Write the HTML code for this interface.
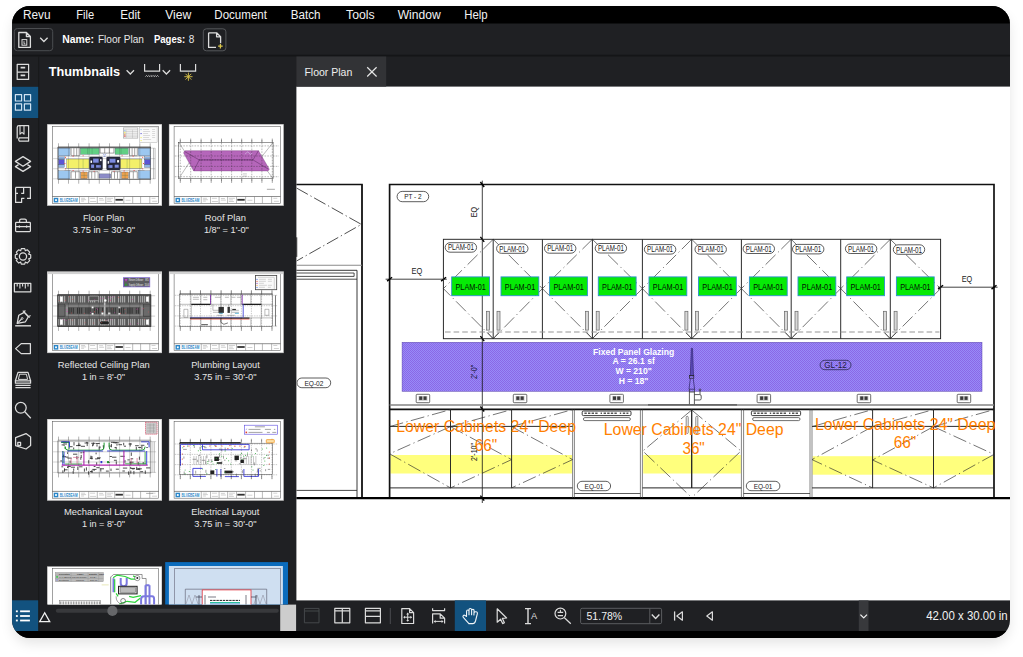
<!DOCTYPE html>
<html lang="en">
<head>
<meta charset="utf-8">
<title>Revu - Floor Plan</title>
<style>
html,body{margin:0;padding:0;background:#fff;}
body{width:1023px;height:657px;overflow:hidden;position:relative;font-family:"Liberation Sans", sans-serif;}
.shadow{position:absolute;left:13px;top:7px;width:996px;height:630px;border-radius:18px;background:#000;
 box-shadow:0 6px 13px rgba(0,0,0,.115),0 1px 3px rgba(0,0,0,.04);}
svg.app{position:absolute;left:0;top:0;width:1023px;height:657px;display:block;font-family:"Liberation Sans", sans-serif;}
svg text{white-space:pre;}
</style>
</head>
<body>
<div class="shadow"></div>
<svg class="app" width="1023" height="657" viewBox="0 0 1023 657">
<defs>
<clipPath id="winclip"><rect x="12" y="6" width="998" height="632" rx="18" ry="18"/></clipPath>
<pattern id="glz" width="2" height="2" patternUnits="userSpaceOnUse">
<rect width="2" height="2" fill="#978cf8"/><rect width="1" height="1" fill="#8b68e6"/><rect x="1" y="1" width="1" height="1" fill="#8b68e6"/>
</pattern>
</defs>
<g clip-path="url(#winclip)">
<rect x="0" y="0" width="1023" height="657" fill="#1f2023"/>
<rect x="0" y="0" width="1023" height="23.5" fill="#000"/>
<rect x="0" y="54.7" width="1023" height="1.8" fill="#141517"/>
<rect x="296.4" y="86.6" width="730" height="513.8" fill="#fff"/>
<rect x="296.4" y="56.5" width="89.8" height="30.1" fill="#323336"/>
<rect x="0" y="631" width="1023" height="30" fill="#000"/>
<rect x="38.2" y="56.5" width="1" height="574.5" fill="#17181a"/>
<g id="menubar">
<text x="22.9" y="18.8" font-size="12" fill="#f2f2f2" textLength="27.6" lengthAdjust="spacingAndGlyphs">Revu</text>
<text x="76.3" y="18.8" font-size="12" fill="#f2f2f2" textLength="17.9" lengthAdjust="spacingAndGlyphs">File</text>
<text x="120.2" y="18.8" font-size="12" fill="#f2f2f2" textLength="20.2" lengthAdjust="spacingAndGlyphs">Edit</text>
<text x="165.2" y="18.8" font-size="12" fill="#f2f2f2" textLength="26.1" lengthAdjust="spacingAndGlyphs">View</text>
<text x="214.3" y="18.8" font-size="12" fill="#f2f2f2" textLength="52.7" lengthAdjust="spacingAndGlyphs">Document</text>
<text x="290.7" y="18.8" font-size="12" fill="#f2f2f2" textLength="29.8" lengthAdjust="spacingAndGlyphs">Batch</text>
<text x="346.1" y="18.8" font-size="12" fill="#f2f2f2" textLength="28.6" lengthAdjust="spacingAndGlyphs">Tools</text>
<text x="397.7" y="18.8" font-size="12" fill="#f2f2f2" textLength="43.0" lengthAdjust="spacingAndGlyphs">Window</text>
<text x="464.3" y="18.8" font-size="12" fill="#f2f2f2" textLength="23.4" lengthAdjust="spacingAndGlyphs">Help</text>
</g>
<g id="toolbar">
<rect x="14.3" y="28.5" width="38.4" height="22.2" rx="3" fill="none" stroke="#4b4d50" stroke-width="1"/>
<path d="M18.8 32.5h7.6l4 4v10.8h-11.6z M26.4 32.5v4h4" fill="none" stroke="#dcdcdc" stroke-width="1.3" stroke-linejoin="round"/>
<rect x="22" y="39.6" width="4.8" height="5.6" fill="none" stroke="#dcdcdc" stroke-width="1"/>
<path d="M24 41.2v2.6h1.3" fill="none" stroke="#dcdcdc" stroke-width="0.9"/>
<path d="M40.2 37.8l3.7 3.7l3.7-3.7" fill="none" stroke="#dcdcdc" stroke-width="1.3"/>
<text x="62.3" y="43.2" font-size="10" fill="#fff" font-weight="bold" textLength="31.7" lengthAdjust="spacingAndGlyphs">Name:</text>
<text x="97.9" y="43.2" font-size="10" fill="#e8e8e8" textLength="46" lengthAdjust="spacingAndGlyphs">Floor Plan</text>
<text x="153.9" y="43.2" font-size="10" fill="#fff" font-weight="bold" textLength="31.3" lengthAdjust="spacingAndGlyphs">Pages:</text>
<text x="188.8" y="43.2" font-size="10" fill="#e8e8e8">8</text>
<rect x="203.3" y="28.8" width="22.6" height="22" rx="3" fill="none" stroke="#55575a" stroke-width="1"/>
<path d="M208.6 32.8h8l4 4v6.4 M216.6 32.8v4h4 M208.6 32.8v14.6h7.4" fill="none" stroke="#dcdcdc" stroke-width="1.3" stroke-linejoin="round"/>
<path d="M220.4 43.9v4.6M218.1 46.2h4.6" stroke="#d9c64a" stroke-width="1.3" fill="none"/>
</g>
<text x="304.4" y="75.8" font-size="10.6" fill="#efefef" textLength="47.9" lengthAdjust="spacingAndGlyphs">Floor Plan</text>
<path d="M367.2 67.3l9.4 9.2M376.6 67.3l-9.4 9.2" stroke="#e4e4e4" stroke-width="1.2" fill="none"/>
<g id="sidebar" fill="none" stroke="#dcdcdc" stroke-width="1.25" stroke-linejoin="round">
<rect x="12" y="86.8" width="26.2" height="31.2" fill="#12527f" stroke="none"/>
<rect x="17.2" y="64.4" width="11.4" height="15"/><path d="M17.2 72h11.4"/>
<path d="M20.6 67.6h4.6M20.6 75.4h4.6" stroke-width="1.6"/>
<g stroke="#cfe2f2" stroke-width="1.2"><rect x="15.4" y="94.6" width="6.2" height="6.4"/><rect x="24.4" y="94.6" width="6.2" height="6.4"/><rect x="15.4" y="103.8" width="6.2" height="6.4"/><rect x="24.4" y="103.8" width="6.2" height="6.4"/></g>
<path d="M17.2 138.6V127.4a1.8 1.8 0 0 1 1.8-1.8h9.6v12.2H19.4a2.2 2.2 0 0 0 0 3.2h9.2v-3.2"/>
<path d="M20 125.6v8.6l2-1.9l2 1.9v-8.6" stroke-width="1.1"/>
<path d="M23 156.6l7.6 4.8l-7.6 4.8l-7.6-4.8z"/><path d="M18.6 164.6l-3.2 2l7.6 4.8l7.6-4.8l-3.2-2"/>
<path d="M15.6 187.4h14.8v11h-3.4M24.4 198.4h-2.8v4h-6v-15"/><path d="M23.6 187.4v6h-2.4M15.6 193.4h2.4"/>
<rect x="15.6" y="222.4" width="14.8" height="9.2" rx="0.8"/><path d="M19.6 222.4v-1.6a1.6 1.6 0 0 1 1.6-1.6h3.6a1.6 1.6 0 0 1 1.6 1.6v1.6M15.6 226.6h14.8M19.4 225.6v2.2M26.6 225.6v2.2"/>
<path d="M21.28 248.69L24.72 248.69L25.32 250.76L25.35 250.77L27.23 249.73L29.67 252.17L28.63 254.05L28.64 254.08L30.71 254.68L30.71 258.12L28.64 258.72L28.63 258.75L29.67 260.63L27.23 263.07L25.35 262.03L25.32 262.04L24.72 264.11L21.28 264.11L20.68 262.04L20.65 262.03L18.77 263.07L16.33 260.63L17.37 258.75L17.36 258.72L15.29 258.12L15.29 254.68L17.36 254.08L17.37 254.05L16.33 252.17L18.77 249.73L20.65 250.77L20.68 250.76z" stroke-width="1.15"/>
<circle cx="23" cy="256.4" r="3.6"/>
<rect x="14.4" y="283.4" width="16.4" height="8.4"/><path d="M17.2 283.4v3M19.9 283.4v5M22.6 283.4v3M25.3 283.4v5M28 283.4v3" stroke-width="1.1"/>
<path d="M15.2 325.8h15.8" stroke-width="1.4"/><path d="M17.2 323.4l1.6-8.2l5.4-2.8l4.2 4.4l-3 5z"/><path d="M24.2 312.4l1-2.2M28.4 316.8l2.2-1.2M22.8 310.6l6.8 7M17.2 323.4l4.4-4.4" stroke-width="1.1"/><circle cx="22.2" cy="318.4" r="0.9" stroke-width="0.9"/>
<path d="M15.6 348.6l5.6-5h9.2v10h-9.2z"/>
<path d="M18 372.4h10l2.6 8.4h-15.2z"/><path d="M19.6 374.2h6.8l1.2 5.2h-9.2z" stroke-width="1"/><path d="M15.4 380.8v2.4h15.2v-2.4M15.4 385.4h15.2M15.4 387.6h15.2" stroke-width="1.2"/>
<circle cx="20.8" cy="407.8" r="5.4"/><path d="M24.8 411.8l6 6.4"/>
<path d="M15.6 437.6l10.4-4l4.6 3.4v8.6l-4.6 3.4l-10.4-3.4z"/><rect x="17.8" y="442.4" width="2.8" height="3"/>
</g>
<text x="48.8" y="76.2" font-size="12.6" fill="#fff" font-weight="bold" textLength="71.4" lengthAdjust="spacingAndGlyphs">Thumbnails</text>
<g fill="none" stroke="#dcdcdc" stroke-width="1.25">
<path d="M126.6 70.3l3.7 3.7l3.7-3.7"/>
<path d="M144.6 64v7.2h15V64" stroke-width="1.2"/>
<path d="M145.4 76.6l1.1-1.1l1.1 1.1l1.1-1.1l1.1 1.1l1.1-1.1l1.1 1.1l1.1-1.1l1.1 1.1l1.1-1.1l1.1 1.1l1.1-1.1l1.1 1.1" stroke-width="0.8"/>
<path d="M162.7 70.3l3.7 3.7l3.7-3.7"/>
<path d="M180.4 64v7.2h15.2V64" stroke-width="1.2"/>
<path d="M188.4 72.6v8.2M184.3 76.7h8.2M185.5 73.8l5.8 5.8M191.3 73.8l-5.8 5.8" stroke="#d8c24a" stroke-width="0.9"/>
</g>
<rect x="12" y="600.3" width="26.2" height="30.7" fill="#12527f"/>
<rect x="15.9" y="610.4" width="1.9" height="1.8" fill="#fff"/><rect x="20.1" y="610.4" width="9.8" height="1.8" fill="#fff"/>
<rect x="15.9" y="615.1" width="1.9" height="1.8" fill="#fff"/><rect x="20.1" y="615.1" width="9.8" height="1.8" fill="#fff"/>
<rect x="15.9" y="619.6" width="1.9" height="1.8" fill="#fff"/><rect x="20.1" y="619.6" width="9.8" height="1.8" fill="#fff"/>
<path d="M44.7 612.8l-5 8.8h10z" fill="none" stroke="#f0f0f0" stroke-width="1.3" stroke-linejoin="miter"/>
<rect x="55.8" y="608.8" width="223" height="4" rx="2" fill="#38393c"/>
<circle cx="112.4" cy="610.9" r="5.1" fill="#66676a"/>
<rect x="280.2" y="604.6" width="15.9" height="26.4" fill="#cdcdcd"/>
<g id="bottombar" fill="none" stroke="#dcdcdc" stroke-width="1.2" stroke-linejoin="round">
<rect x="454.8" y="600.4" width="31.2" height="30.6" fill="#12527f" stroke="none"/>
<g stroke="#45484b" stroke-width="1"><rect x="304.4" y="608.4" width="14.6" height="14.4"/><path d="M304.4 611h14.6"/></g>
<rect x="334.8" y="608.4" width="15" height="14.4"/><path d="M334.8 610.8h15M342.3 608.4v14.4"/>
<rect x="365.4" y="608.4" width="15" height="14.4"/><path d="M365.4 610.8h15M365.4 616.4h15"/>
<path d="M390.3 608v16" stroke="#4a4c4f" stroke-width="1"/>
<path d="M401.8 608.6h7.8l4 4v10.9h-11.8z M409.6 608.6v4h4"/>
<path d="M404.2 617.2h7M407.7 613.6v7.2" stroke-width="1"/><path d="M407.7 612.6l1.5 1.8h-3zM407.7 621.8l1.5-1.8h-3zM403.2 617.2l1.8-1.5v3zM412.2 617.2l-1.8-1.5v3z" fill="#dcdcdc" stroke="none"/>
<path d="M432.6 608.2v2.4h12v-2.4" stroke-width="1.2"/><path d="M432.6 623.6v-9.8h7.6l4.4 4.4v5.4M440.2 613.8v4.4h4.4"/>
<path d="M434.6 621.4h8" stroke-width="1"/><path d="M433.6 621.4l2-1.5v3zM443.6 621.4l-2-1.5v3z" fill="#dcdcdc" stroke="none"/>
<path d="M468.9 623.6L463.3 617.4C462.3 616.1 463.7 614.7 465 615.4L466.5 616.5L466.6 611.2C466.6 609.5 469 609.5 469 611.2L469 609.8C469 608 471.6 608 471.6 609.8L471.6 610.6C471.6 608.9 474.2 609 474.1 610.8L474.2 612.6C474.9 611.2 477.7 611.6 477.4 613.5L475.5 621C475 622.8 474.3 623.6 472.8 623.6ZM469 611.2V614.8M471.6 610.6V614.8M474.1 610.8L473.9 615" stroke="#f1f5f8" stroke-width="1.1" stroke-linejoin="round" stroke-linecap="round"/>
<path d="M497.2 608.8v13.4l3.4-3l2 4.4l1.8-0.8l-2-4.4l4.2-0.4z" stroke-width="1.2"/>
<path d="M525 608.6h6M525 623.6h6M528 608.6v15" stroke-width="1.4"/>
<text x="531" y="619.4" font-size="9.6" fill="#dcdcdc" textLength="6.2" lengthAdjust="spacingAndGlyphs" stroke="none">A</text>
<circle cx="560.4" cy="613.6" r="5.4"/><path d="M564.4 617.8l6.4 6"/><path d="M557.6 612.4h5.6M560.4 609.8v2.6M557.8 615.6h5.2" stroke-width="1.1"/>
<rect x="580.6" y="608.3" width="81" height="15.4" rx="1.5" stroke="#5a5c5f" stroke-width="1"/><path d="M649.8 608.3v15.4" stroke="#5a5c5f" stroke-width="1"/>
<path d="M651.8 614.6l3.8 3.8l3.8-3.8" stroke-width="1.4"/>
<text x="586.5" y="620" font-size="10.4" fill="#f0f0f0" textLength="35.7" lengthAdjust="spacingAndGlyphs" stroke="none">51.78%</text>
<path d="M674.6 611.4v9.2" stroke-width="1.3"/><path d="M682.4 611.8v8.4l-5.6-4.2z" stroke-width="1.2"/>
<path d="M712.4 611.8v8.4l-5.6-4.2z" stroke-width="1.2"/>
<rect x="858.8" y="600.4" width="9.7" height="30.6" fill="#38393c" stroke="none"/>
<path d="M860.4 614.6l3.3 3.3l3.3-3.3" stroke-width="1.3" stroke="#f0f0f0"/>
<text x="926.2" y="620.2" font-size="12" fill="#f2f2f2" textLength="81.5" lengthAdjust="spacingAndGlyphs" stroke="none">42.00 x 30.00 in</text>
</g>
<g id="thumb1" transform="translate(47.1 124.1)">
<rect x="0" y="0" width="114.9" height="81.8" fill="#c4c4c4"/><rect x="0.7" y="0.7" width="113.5" height="80.2" fill="#fff"/>
<rect x="5.2" y="2.4" width="106.4" height="76.8" fill="none" stroke="#555" stroke-width="0.55"/>
<rect x="10.8" y="23.2" width="92.8" height="32" fill="#fff" stroke="#333" stroke-width="0.6"/>
<rect x="10.8" y="22.4" width="92.8" height="1.5" fill="#6a6a6a"/>
<g stroke="#4a5a70" stroke-width="0.35">
<rect x="11.1" y="24" width="11.8" height="7.7" fill="#9cc7f0"/>
<rect x="11.1" y="46.7" width="11.8" height="8" fill="#9cc7f0"/>
<rect x="91.2" y="24" width="11.8" height="7.7" fill="#9cc7f0"/>
<rect x="91.2" y="46.7" width="11.8" height="8" fill="#9cc7f0"/>
<rect x="11.4" y="32.7" width="5.8" height="3" fill="#8fb4e6"/>
<rect x="11.4" y="35.7" width="5.8" height="5" fill="#5b55d6"/>
<rect x="11.4" y="40.7" width="5.8" height="2.6" fill="#8fb4e6"/>
<rect x="97.4" y="32.7" width="5.8" height="3" fill="#8fb4e6"/>
<rect x="97.4" y="35.7" width="5.8" height="5" fill="#5b55d6"/>
<rect x="97.4" y="40.7" width="5.8" height="2.6" fill="#8fb4e6"/>
<rect x="33.4" y="24" width="18.6" height="6.2" fill="#62cf84"/>
<rect x="67.9" y="24" width="13.2" height="6.2" fill="#62cf84"/>
<rect x="19.6" y="34.9" width="22.4" height="9.4" fill="#f3f069"/>
<rect x="73" y="34.9" width="21.8" height="9.4" fill="#f3f069"/>
<rect x="33.7" y="47.9" width="6.7" height="6.8" fill="#eea04e"/>
<rect x="74.6" y="47.9" width="6.7" height="6.8" fill="#eea04e"/>
<rect x="52" y="49.8" width="11.6" height="4.2" fill="#8d8cc8"/>
</g>
<path d="M40.4 24v6.2M45 24v6.2M74 24v6.2M36 34.9v9.4M80 34.9v9.4M37 47.9v6.8M34 51.3h6.4M78 47.9v6.8M74.6 51.3h6.7" stroke="#3a6a48" stroke-width="0.35" opacity=".7"/>
<rect x="42.2" y="32.6" width="13.4" height="13.4" rx="1.4" fill="#23253a"/><rect x="59.3" y="32.6" width="14" height="13.4" rx="1.4" fill="#23253a"/>
<g fill="#7d8be0"><rect x="46" y="34.4" width="5.6" height="4.2"/><rect x="44" y="40.4" width="3" height="3.4"/><rect x="49" y="41" width="4.6" height="2.6"/><rect x="62.4" y="34.6" width="6" height="4"/><rect x="61.4" y="41" width="4" height="2.8"/><rect x="67.6" y="40.6" width="4" height="3"/></g>
<g fill="#fff"><rect x="43.4" y="36.4" width="1.6" height="2.4"/><rect x="53" y="35" width="1.4" height="2"/><rect x="60.6" y="37" width="1.2" height="2.6"/><rect x="70" y="36" width="2" height="2.4"/></g>
<path d="M24 24v7.6h8.6V24M26.8 24v7.6M29.6 24v7.6M53 24v5h13.8V24M57.6 24v5M62.2 24v5M82.4 24v7.6h7.8V24M85 24v7.6M87.6 24v7.6M24 47.6v7M24 47.6h8.8v7M28.4 47.6v7M41.4 47.6v7M41.4 47.6h9.6v7M44.6 47.6v7M47.8 47.6v7M64.4 47.6h9.2v7M64.4 47.6v7M67.4 47.6v7M70.4 47.6v7M82.4 47.6h7.8v7M82.4 47.6v7M86.2 47.6v7" stroke="#333" stroke-width="0.45" fill="none"/>
<path d="M17.4 32.2h80M17.4 46.4h80" stroke="#777" stroke-width="0.35"/>
<g fill="#e33"><circle cx="18.4" cy="33.2" r="0.55"/><circle cx="26" cy="32" r="0.55"/><circle cx="36" cy="31.6" r="0.55"/><circle cx="75" cy="31.6" r="0.55"/><circle cx="86" cy="32" r="0.55"/><circle cx="95.6" cy="33.2" r="0.55"/><circle cx="18.4" cy="44.6" r="0.55"/><circle cx="26" cy="46.4" r="0.55"/><circle cx="36" cy="47" r="0.55"/><circle cx="47" cy="47.2" r="0.55"/><circle cx="67" cy="47.2" r="0.55"/><circle cx="77" cy="46.8" r="0.55"/><circle cx="87" cy="46.4" r="0.55"/><circle cx="95.6" cy="44.6" r="0.55"/><circle cx="17.8" cy="39.4" r="0.55"/><circle cx="96.4" cy="39.4" r="0.55"/></g>
<path d="M55.8 29.6l1.6 1.6l1.6-1.6M56.2 31.6l1.2 1.2l1.2-1.2" stroke="#3a5ad0" stroke-width="0.45" fill="none"/>
<path d="M11.4 23.2v32M21.4 23.2v32M31.6 23.2v32M42 23.2v32M52.2 23.2v32M62.4 23.2v32M72.5 23.2v32M82.5 23.2v32M92.7 23.2v32M103.1 23.2v32M6 24.1h102M6 34.5h102M6 44.6h102M6 54.7h102" stroke="#444" stroke-width="0.3" opacity=".75"/>
<path d="M11.4 19.2v3.8M11.4 55.4v4.2M21.4 19.2v3.8M21.4 55.4v4.2M31.6 19.2v3.8M31.6 55.4v4.2M42 19.2v3.8M42 55.4v4.2M52.2 19.2v3.8M52.2 55.4v4.2M62.4 19.2v3.8M62.4 55.4v4.2M72.5 19.2v3.8M72.5 55.4v4.2M82.5 19.2v3.8M82.5 55.4v4.2M92.7 19.2v3.8M92.7 55.4v4.2M103.1 19.2v3.8M103.1 55.4v4.2" stroke="#444" stroke-width="0.5" opacity=".8"/>
<path d="M106.4 24v31M108 24v31" stroke="#666" stroke-width="0.4"/>
<rect x="76.4" y="3.8" width="14.4" height="10.2" fill="#f4f4f4" stroke="#777" stroke-width="0.4"/><path d="M76.4 5.6h14.4M76.4 7.4h14.4M76.4 9.2h14.4M76.4 11h14.4M76.4 12.6h14.4M79 5.6v8.4M85.4 5.6v8.4" stroke="#999" stroke-width="0.3"/>
<g><rect x="77" y="7.8" width="1.4" height="1.1" fill="#f3f069"/><rect x="77" y="9.6" width="1.4" height="1.1" fill="#eea04e"/><rect x="77" y="11.4" width="1.4" height="1.1" fill="#e44"/><rect x="77" y="6" width="1.4" height="1.1" fill="#9cc7f0"/></g>
<rect x="92.4" y="2.9" width="17.6" height="15.2" fill="#fafafa" stroke="#999" stroke-width="0.4"/><path d="M96 5.4h6M96 7.4h7M96 9.4h5M96 11.4h7M96 13.4h6M96 15.4h8M105 5.4h3M105 7.4h3M105 9.4h3M105 11.4h3M105 13.4h3" stroke="#aaa" stroke-width="0.4"/>
<g><rect x="93.4" y="5" width="1.2" height="1" fill="#9cc7f0"/><rect x="93.4" y="9" width="1.2" height="1" fill="#5b55d6"/><rect x="93.4" y="13" width="1.2" height="1" fill="#f3f069"/><rect x="93.4" y="16" width="1.2" height="1" fill="#f3f069"/></g>
<g id="tb">
<path d="M5.2 72.4h106.4" stroke="#444" stroke-width="0.6"/>
<path d="M32.4 72.4v6.8M41.6 72.4v6.8M50.2 72.4v6.8M58.7 72.4v6.8M67.6 72.4v6.8M76.7 72.4v6.8M85.6 72.4v6.8M93.5 72.4v6.8M102.7 72.4v6.8" stroke="#777" stroke-width="0.5"/>
<rect x="6.6" y="73.7" width="4.6" height="4.6" fill="#2a86c8"/><rect x="8" y="75.1" width="1.8" height="1.8" fill="#fff"/>
<text x="12.6" y="78" font-size="4.6" font-weight="bold" fill="#2a86c8" textLength="17.8" lengthAdjust="spacingAndGlyphs">BLUEBEAM</text>
<rect x="68.4" y="74.8" width="7.4" height="1.8" fill="#333"/>
<path d="M34 74.2h4M34 75.6h5M34 77h3M43 74.2h5M43 77.4h6M52 74.4h4M52 76h5M60 74.2h6M60 75.8h4M60 77.4h5M78.5 76.2h5M104.4 74.2h4M105 77.2h5" stroke="#999" stroke-width="0.45"/>
</g>
</g>
<text x="103.7" y="220.5" font-size="9.7" fill="#e6e6e6" text-anchor="middle" textLength="41.5" lengthAdjust="spacingAndGlyphs">Floor Plan</text>
<text x="103.9" y="232.5" font-size="9.7" fill="#e6e6e6" text-anchor="middle" textLength="62.3" lengthAdjust="spacingAndGlyphs">3.75 in = 30'-0&quot;</text>
<g id="thumb2" transform="translate(168.9 124.1)">
<rect x="0" y="0" width="114.9" height="81.8" fill="#c4c4c4"/><rect x="0.7" y="0.7" width="113.5" height="80.2" fill="#fff"/>
<rect x="5.2" y="2.4" width="106.4" height="76.8" fill="none" stroke="#555" stroke-width="0.55"/>
<rect x="9.8" y="18.3" width="94.4" height="36.2" fill="none" stroke="#444" stroke-width="0.55"/>
<path d="M9.8 18.3l12 18.1l-12 18.1M104.2 18.3l-14 17.6l14 18.6" stroke="#555" stroke-width="0.4" fill="none"/>
<path d="M16.3 26.6h73.3l10.4 17.8a1.6 1.6 0 0 1-1.4 2.4H24.8L15.3 30a2.2 2.2 0 0 1 1-3.4z" fill="#b566ba" stroke="#7a3d80" stroke-width="0.4"/>
<path d="M30.3 35.8h53.8M16 27.6l14.3 8.2l-5.4 11M89.6 26.6l-5.5 9.2l15 9" stroke="#5a2a60" stroke-width="0.5" fill="none"/>
<path d="M30.3 35.8h53.8" stroke="#402048" stroke-width="0.8" stroke-dasharray="0.8 0.8"/>
<path d="M11.4 16v41M21.8 16v41M32.2 16v41M42.3 16v41M52.6 16v41M62.7 16v41M72.8 16v41M82.9 16v41M93 16v41M103.4 16v41M6 21.8h104M6 31.9h104M6 42.3h104M6 52.6h104" stroke="#222" stroke-width="0.42" stroke-dasharray="1.6 1.2" opacity=".75"/>
<path d="M11.4 14.5v3.8M11.4 54.6v4.2M21.8 14.5v3.8M21.8 54.6v4.2M32.2 14.5v3.8M32.2 54.6v4.2M42.3 14.5v3.8M42.3 54.6v4.2M52.6 14.5v3.8M52.6 54.6v4.2M62.7 14.5v3.8M62.7 54.6v4.2M72.8 14.5v3.8M72.8 54.6v4.2M82.9 14.5v3.8M82.9 54.6v4.2M93 14.5v3.8M93 54.6v4.2M103.4 14.5v3.8M103.4 54.6v4.2" stroke="#222" stroke-width="0.5" opacity=".8"/>
<path d="M98 65.2h8" stroke="#555" stroke-width="0.5"/><path d="M74 49.6h4M74 51h4M74 52.4h4" stroke="#999" stroke-width="0.4"/>
<path d="M76 30l3-2.4l2.4 2.8l2-1.6" stroke="#d8d0f0" stroke-width="0.5" fill="none"/>
<g id="tb">
<path d="M5.2 72.4h106.4" stroke="#444" stroke-width="0.6"/>
<path d="M32.4 72.4v6.8M41.6 72.4v6.8M50.2 72.4v6.8M58.7 72.4v6.8M67.6 72.4v6.8M76.7 72.4v6.8M85.6 72.4v6.8M93.5 72.4v6.8M102.7 72.4v6.8" stroke="#777" stroke-width="0.5"/>
<rect x="6.6" y="73.7" width="4.6" height="4.6" fill="#2a86c8"/><rect x="8" y="75.1" width="1.8" height="1.8" fill="#fff"/>
<text x="12.6" y="78" font-size="4.6" font-weight="bold" fill="#2a86c8" textLength="17.8" lengthAdjust="spacingAndGlyphs">BLUEBEAM</text>
<rect x="68.4" y="74.8" width="7.4" height="1.8" fill="#333"/>
<path d="M34 74.2h4M34 75.6h5M34 77h3M43 74.2h5M43 77.4h6M52 74.4h4M52 76h5M60 74.2h6M60 75.8h4M60 77.4h5M78.5 76.2h5M104.4 74.2h4M105 77.2h5" stroke="#999" stroke-width="0.45"/>
</g>
</g>
<text x="225.3" y="220.5" font-size="9.7" fill="#e6e6e6" text-anchor="middle" textLength="41.1" lengthAdjust="spacingAndGlyphs">Roof Plan</text>
<text x="226.4" y="232.5" font-size="9.7" fill="#e6e6e6" text-anchor="middle" textLength="45" lengthAdjust="spacingAndGlyphs">1/8&quot; = 1'-0&quot;</text>
<g id="thumb3" transform="translate(47.1 271.3)">
<rect x="0" y="0" width="114.9" height="81.8" fill="#c4c4c4"/><rect x="0.7" y="0.7" width="113.5" height="80.2" fill="#fff"/>
<rect x="5.2" y="2.4" width="106.4" height="76.8" fill="none" stroke="#555" stroke-width="0.55"/>
<rect x="0.7" y="0.7" width="113.5" height="2.1" fill="#d2d2d2"/>
<rect x="10.6" y="23.4" width="93.2" height="31.8" fill="#6c6c6c" stroke="#222" stroke-width="0.7"/>
<rect x="10.6" y="23.4" width="93.2" height="9" fill="#4a4a4a" opacity=".55"/><rect x="10.6" y="46.4" width="93.2" height="8.8" fill="#4a4a4a" opacity=".55"/>
<rect x="18.4" y="33.6" width="77.6" height="11.6" fill="#8f8f8f" stroke="#555" stroke-width="0.4"/><rect x="21" y="35.6" width="72.4" height="7.6" fill="#5e5e5e"/>
<path d="M11.6 24.6v6.6M11.6 47.6v6.4M13.6 24.6v6.6M13.6 47.6v6.4M15.6 24.6v6.6M15.6 47.6v6.4M17.6 24.6v6.6M17.6 47.6v6.4M21.6 24.6v6.6M21.6 47.6v6.4M23.6 24.6v6.6M23.6 47.6v6.4M25.6 24.6v6.6M25.6 47.6v6.4M27.6 24.6v6.6M27.6 47.6v6.4M31.6 24.6v6.6M31.6 47.6v6.4M33.6 24.6v6.6M33.6 47.6v6.4M35.6 24.6v6.6M35.6 47.6v6.4M37.6 24.6v6.6M37.6 47.6v6.4M41.6 24.6v6.6M41.6 47.6v6.4M43.6 24.6v6.6M43.6 47.6v6.4M45.6 24.6v6.6M45.6 47.6v6.4M47.6 24.6v6.6M47.6 47.6v6.4M51.6 24.6v6.6M51.6 47.6v6.4M53.6 24.6v6.6M53.6 47.6v6.4M55.6 24.6v6.6M55.6 47.6v6.4M57.6 24.6v6.6M57.6 47.6v6.4M61.6 24.6v6.6M61.6 47.6v6.4M63.6 24.6v6.6M63.6 47.6v6.4M65.6 24.6v6.6M65.6 47.6v6.4M67.6 24.6v6.6M67.6 47.6v6.4M71.6 24.6v6.6M71.6 47.6v6.4M73.6 24.6v6.6M73.6 47.6v6.4M75.6 24.6v6.6M75.6 47.6v6.4M77.6 24.6v6.6M77.6 47.6v6.4M81.6 24.6v6.6M81.6 47.6v6.4M83.6 24.6v6.6M83.6 47.6v6.4M85.6 24.6v6.6M85.6 47.6v6.4M87.6 24.6v6.6M87.6 47.6v6.4M91.6 24.6v6.6M91.6 47.6v6.4M93.6 24.6v6.6M93.6 47.6v6.4M95.6 24.6v6.6M95.6 47.6v6.4M97.6 24.6v6.6M97.6 47.6v6.4M101.6 24.6v6.6M101.6 47.6v6.4" stroke="#f0f0f0" stroke-width="0.75" opacity=".85"/>
<path d="M22.0 36.4v6M24.1 36.4v6M26.2 36.4v6M30.4 36.4v6M32.5 36.4v6M34.6 36.4v6M38.8 36.4v6M40.9 36.4v6M43.0 36.4v6M47.2 36.4v6M49.3 36.4v6M51.4 36.4v6M55.6 36.4v6M57.7 36.4v6M59.8 36.4v6M64.0 36.4v6M66.1 36.4v6M68.2 36.4v6M72.4 36.4v6M74.5 36.4v6M76.6 36.4v6M80.8 36.4v6M82.9 36.4v6M85.0 36.4v6M89.2 36.4v6M91.3 36.4v6" stroke="#2c2c2c" stroke-width="0.9"/>
<g fill="#fff"><rect x="44.6" y="35.2" width="1.8" height="1.8"/><rect x="44.6" y="41.6" width="1.8" height="1.8"/><rect x="54.4" y="41.2" width="2" height="2"/><rect x="61.2" y="41.2" width="2" height="2"/><rect x="71.4" y="35.2" width="1.8" height="1.8"/><rect x="71.4" y="41.6" width="1.8" height="1.8"/><rect x="57" y="28" width="2.4" height="2.4" rx="1.2"/><rect x="13" y="25.2" width="2.6" height="5.2"/><rect x="99" y="25.2" width="2.6" height="5.2"/><rect x="13" y="48.2" width="2.6" height="5.2"/><rect x="99" y="48.2" width="2.6" height="5.2"/></g>
<rect x="42" y="24.8" width="9.6" height="4.6" rx="1" fill="#555" stroke="#ddd" stroke-width="0.5"/><rect x="52.6" y="49.6" width="9.6" height="3.8" rx="1.6" fill="#222" stroke="#ddd" stroke-width="0.5"/>
<path d="M57.6 31v14" stroke="#bbb" stroke-width="1.6"/><rect x="11.4" y="33.4" width="6.4" height="12" fill="#6a6a6a" stroke="#333" stroke-width="0.4"/><rect x="96.6" y="33.4" width="6.4" height="12" fill="#6a6a6a" stroke="#333" stroke-width="0.4"/>
<g fill="#c4a"><circle cx="41.1" cy="28.8" r="0.45"/><circle cx="16.3" cy="48.2" r="0.45"/><circle cx="64.5" cy="48.4" r="0.45"/><circle cx="19.7" cy="40.1" r="0.45"/><circle cx="20.2" cy="40.1" r="0.45"/><circle cx="62.9" cy="29.3" r="0.45"/><circle cx="64.5" cy="26.2" r="0.45"/><circle cx="47.7" cy="28.1" r="0.45"/><circle cx="89.3" cy="37.8" r="0.45"/><circle cx="60.7" cy="48.6" r="0.45"/><circle cx="85.5" cy="28.2" r="0.45"/><circle cx="63.4" cy="28.7" r="0.45"/><circle cx="61.3" cy="26.1" r="0.45"/><circle cx="67.7" cy="41.4" r="0.45"/><circle cx="50.5" cy="37.9" r="0.45"/><circle cx="95.1" cy="37.6" r="0.45"/><circle cx="83.5" cy="52.6" r="0.45"/><circle cx="19.4" cy="38.1" r="0.45"/><circle cx="90.8" cy="51.9" r="0.45"/><circle cx="66.8" cy="25.2" r="0.45"/><circle cx="49.6" cy="37.3" r="0.45"/><circle cx="56.0" cy="26.9" r="0.45"/><circle cx="19.0" cy="49.1" r="0.45"/><circle cx="90.8" cy="37.7" r="0.45"/><circle cx="43.5" cy="41.2" r="0.45"/><circle cx="53.1" cy="26.9" r="0.45"/></g>
<g fill="#d55"><circle cx="54.7" cy="51.1" r="0.45"/><circle cx="77.8" cy="38.3" r="0.45"/><circle cx="101.4" cy="40.6" r="0.45"/><circle cx="46.7" cy="51.7" r="0.45"/><circle cx="96.7" cy="37.3" r="0.45"/><circle cx="22.5" cy="25.4" r="0.45"/><circle cx="37.9" cy="51.5" r="0.45"/><circle cx="47.2" cy="40.2" r="0.45"/><circle cx="52.4" cy="48.6" r="0.45"/><circle cx="24.3" cy="41.7" r="0.45"/><circle cx="37.1" cy="42.0" r="0.45"/><circle cx="73.4" cy="41.9" r="0.45"/><circle cx="25.6" cy="28.3" r="0.45"/><circle cx="71.3" cy="26.0" r="0.45"/><circle cx="65.0" cy="37.6" r="0.45"/><circle cx="25.1" cy="48.7" r="0.45"/><circle cx="63.0" cy="29.4" r="0.45"/><circle cx="58.4" cy="49.3" r="0.45"/><circle cx="78.6" cy="41.8" r="0.45"/><circle cx="82.2" cy="52.6" r="0.45"/><circle cx="47.3" cy="40.8" r="0.45"/><circle cx="55.3" cy="40.1" r="0.45"/><circle cx="18.1" cy="28.9" r="0.45"/><circle cx="21.9" cy="48.1" r="0.45"/><circle cx="12.0" cy="29.1" r="0.45"/><circle cx="97.4" cy="48.1" r="0.45"/></g>
<path d="M11.4 23.4v31.8M21.4 23.4v31.8M31.6 23.4v31.8M42 23.4v31.8M52.2 23.4v31.8M62.4 23.4v31.8M72.5 23.4v31.8M82.5 23.4v31.8M92.7 23.4v31.8M103.1 23.4v31.8M6 24.4h102M6 34.6h102M6 44.8h102M6 55h102" stroke="#222" stroke-width="0.3" opacity=".7"/>
<path d="M11.4 19.4v3.8M11.4 55.4v4.2M21.4 19.4v3.8M21.4 55.4v4.2M31.6 19.4v3.8M31.6 55.4v4.2M42 19.4v3.8M42 55.4v4.2M52.2 19.4v3.8M52.2 55.4v4.2M62.4 19.4v3.8M62.4 55.4v4.2M72.5 19.4v3.8M72.5 55.4v4.2M82.5 19.4v3.8M82.5 55.4v4.2M92.7 19.4v3.8M92.7 55.4v4.2M103.1 19.4v3.8M103.1 55.4v4.2" stroke="#444" stroke-width="0.5" opacity=".8"/>
<rect x="76.3" y="6.4" width="26.4" height="9.2" fill="#5c5c60" stroke="#7b62d6" stroke-width="0.7"/>
<path d="M77.4 7.8h3l-1.5 2.6z" fill="#c23cc8"/><path d="M77.4 14.2h3l-1.5-2.6z" fill="#2aa23a"/>
<text x="81.6" y="10.2" font-size="2.9" fill="#e8e8e8" textLength="14.6" lengthAdjust="spacingAndGlyphs">Return Diffuser</text><text x="98.2" y="10.2" font-size="2.9" fill="#e8e8e8">85</text>
<text x="81.6" y="14.4" font-size="2.9" fill="#e8e8e8" textLength="14.6" lengthAdjust="spacingAndGlyphs">Supply Diffuser</text><text x="97.4" y="14.4" font-size="2.9" fill="#e8e8e8">104</text>
<g id="tb">
<path d="M5.2 72.4h106.4" stroke="#444" stroke-width="0.6"/>
<path d="M32.4 72.4v6.8M41.6 72.4v6.8M50.2 72.4v6.8M58.7 72.4v6.8M67.6 72.4v6.8M76.7 72.4v6.8M85.6 72.4v6.8M93.5 72.4v6.8M102.7 72.4v6.8" stroke="#777" stroke-width="0.5"/>
<rect x="6.6" y="73.7" width="4.6" height="4.6" fill="#2a86c8"/><rect x="8" y="75.1" width="1.8" height="1.8" fill="#fff"/>
<text x="12.6" y="78" font-size="4.6" font-weight="bold" fill="#2a86c8" textLength="17.8" lengthAdjust="spacingAndGlyphs">BLUEBEAM</text>
<rect x="68.4" y="74.8" width="7.4" height="1.8" fill="#333"/>
<path d="M34 74.2h4M34 75.6h5M34 77h3M43 74.2h5M43 77.4h6M52 74.4h4M52 76h5M60 74.2h6M60 75.8h4M60 77.4h5M78.5 76.2h5M104.4 74.2h4M105 77.2h5" stroke="#999" stroke-width="0.45"/>
</g>
</g>
<text x="103.8" y="368.1" font-size="9.7" fill="#e6e6e6" text-anchor="middle" textLength="92" lengthAdjust="spacingAndGlyphs">Reflected Ceiling Plan</text>
<text x="103.5" y="380.1" font-size="9.7" fill="#e6e6e6" text-anchor="middle" textLength="43.2" lengthAdjust="spacingAndGlyphs">1 in = 8'-0&quot;</text>
<g id="thumb4" transform="translate(168.9 271.3)">
<rect x="0" y="0" width="114.9" height="81.8" fill="#c4c4c4"/><rect x="0.7" y="0.7" width="113.5" height="80.2" fill="#fff"/>
<rect x="5.2" y="2.4" width="106.4" height="76.8" fill="none" stroke="#555" stroke-width="0.55"/>
<rect x="0.7" y="0.7" width="113.5" height="2.1" fill="#d2d2d2"/>
<rect x="10.8" y="22.8" width="92.8" height="32.4" fill="#fff" stroke="#444" stroke-width="0.5"/><rect x="10.8" y="22" width="92.8" height="1.4" fill="#8a8a8a"/>
<path d="M22 23v10M32 23v10M42 23v10M52 23v10M62 23v10M72 23v10M82 23v10M92 23v10M22 46.6v8.6M32 46.6v8.6M42 46.6v8.6M52 46.6v8.6M62 46.6v8.6M72 46.6v8.6M82 46.6v8.6M92 46.6v8.6M10.8 33h92.8M10.8 46.6h92.8M22.4 33v13.6M92.4 33v13.6M24 26h6M24 28h6M34.4 26h4M34.4 28.4h4M46 26h6M56 26h4M62.6 26h4M68 26h4M15 38h4v8h-4zM96 38h4v6h-4zM44 33v6h8v-6M44 41h9M60 33v6h10M62 41h8M48 44h6M58 44h8" stroke="#555" stroke-width="0.4" fill="none"/>
<g fill="#333"><rect x="49.6" y="35.6" width="5.4" height="6"/><rect x="58.6" y="35.6" width="2.4" height="6"/><rect x="63.4" y="37.6" width="3.6" height="1.2"/><rect x="32.4" y="53" width="6.6" height="0.9"/></g>
<path d="M22.4 33h19.2M73.4 33h19M21.2 46.9h59.4" stroke="#1c1c1c" stroke-width="1.3"/>
<path d="M41.6 23.4v9.6M73.3 23.4v9.6" stroke="#8a3ab8" stroke-width="0.9"/><path d="M74.3 33v13.4" stroke="#4646d8" stroke-width="0.9"/><path d="M21.2 47.9h59.4" stroke="#e03a2a" stroke-width="0.6"/><path d="M21.2 46.1h52" stroke="#4646d8" stroke-width="0.4"/>
<path d="M52 47v4l3 2l4-1.4" stroke="#222" stroke-width="0.6" fill="none"/><path d="M50 42h4" stroke="#29c" stroke-width="0.7"/><path d="M66 42h4" stroke="#29c" stroke-width="0.7"/>
<path d="M11.4 20v38M21.4 20v38M31.6 20v38M42 20v38M52.2 20v38M62.4 20v38M72.5 20v38M82.5 20v38M92.7 20v38M103.1 20v38M6 24h103M6 34.4h103M6 44.6h103M6 54.8h103" stroke="#111" stroke-width="0.4" stroke-dasharray="1.4 1" opacity=".55"/>
<path d="M11.4 18.8v3.8M11.4 55.4v4.2M21.4 18.8v3.8M21.4 55.4v4.2M31.6 18.8v3.8M31.6 55.4v4.2M42 18.8v3.8M42 55.4v4.2M52.2 18.8v3.8M52.2 55.4v4.2M62.4 18.8v3.8M62.4 55.4v4.2M72.5 18.8v3.8M72.5 55.4v4.2M82.5 18.8v3.8M82.5 55.4v4.2M92.7 18.8v3.8M92.7 55.4v4.2M103.1 18.8v3.8M103.1 55.4v4.2" stroke="#111" stroke-width="0.5" opacity=".8"/>
<path d="M106.6 24v31" stroke="#555" stroke-width="0.8"/>
<rect x="86.6" y="4.2" width="21.2" height="14.2" fill="#fafafa" stroke="#444" stroke-width="0.8"/><path d="M89 6h16M90 8h7M90 10h7M90 12h5M90 14h8M90 16h6M99 8h4M99 10h4M99 14h4M99 16h3M105.4 6v12" stroke="#999" stroke-width="0.4"/><g><rect x="87.6" y="7.6" width="1" height="1" fill="#46d"/><rect x="87.6" y="9.6" width="1" height="1" fill="#e43"/><rect x="87.6" y="11.6" width="1" height="1" fill="#8a3ab8"/><rect x="87.6" y="13.6" width="1" height="1" fill="#e93"/><rect x="87.6" y="15.6" width="1" height="1" fill="#46d"/></g>
<g id="tb">
<path d="M5.2 72.4h106.4" stroke="#444" stroke-width="0.6"/>
<path d="M32.4 72.4v6.8M41.6 72.4v6.8M50.2 72.4v6.8M58.7 72.4v6.8M67.6 72.4v6.8M76.7 72.4v6.8M85.6 72.4v6.8M93.5 72.4v6.8M102.7 72.4v6.8" stroke="#777" stroke-width="0.5"/>
<rect x="6.6" y="73.7" width="4.6" height="4.6" fill="#2a86c8"/><rect x="8" y="75.1" width="1.8" height="1.8" fill="#fff"/>
<text x="12.6" y="78" font-size="4.6" font-weight="bold" fill="#2a86c8" textLength="17.8" lengthAdjust="spacingAndGlyphs">BLUEBEAM</text>
<rect x="68.4" y="74.8" width="7.4" height="1.8" fill="#333"/>
<path d="M34 74.2h4M34 75.6h5M34 77h3M43 74.2h5M43 77.4h6M52 74.4h4M52 76h5M60 74.2h6M60 75.8h4M60 77.4h5M78.5 76.2h5M104.4 74.2h4M105 77.2h5" stroke="#999" stroke-width="0.45"/>
</g>
</g>
<text x="225.5" y="368.1" font-size="9.7" fill="#e6e6e6" text-anchor="middle" textLength="68.6" lengthAdjust="spacingAndGlyphs">Plumbing Layout</text>
<text x="225.4" y="380.1" font-size="9.7" fill="#e6e6e6" text-anchor="middle" textLength="62.2" lengthAdjust="spacingAndGlyphs">3.75 in = 30'-0&quot;</text>
<g id="thumb5" transform="translate(47.1 419)">
<rect x="0" y="0" width="114.9" height="81.8" fill="#c4c4c4"/><rect x="0.7" y="0.7" width="113.5" height="80.2" fill="#fff"/>
<rect x="5.2" y="2.4" width="106.4" height="76.8" fill="none" stroke="#555" stroke-width="0.55"/>
<rect x="10.8" y="21.8" width="93" height="32.2" fill="#fff" stroke="#444" stroke-width="0.5"/><rect x="10.8" y="20.6" width="93" height="1.6" fill="#b5b5b5"/>
<path d="M52.8 49.8h4.1M83.7 39.8h2.4M84.2 33.5v3.4M26.9 23.1v3.4M81.5 25.0h3.4M71.3 25.7h3.6M33.2 33.8h1.8M18.9 23.1v2.9M48.0 39.9h2.5M14.3 47.8h1.8M83.1 24.1v3.4M49.9 25.3v2.3M83.7 42.7v3.4M63.8 23.3h3.8M39.1 23.4h1.5M67.7 23.8h4.1M26.6 28.5v2.0M61.7 27.1h2.8M16.4 35.6v2.8M56.2 26.1v2.2M88.0 26.7h3.7M49.2 48.7h3.2M44.9 50.9v3.1M64.9 38.2h4.4M69.0 25.9h1.7M77.9 41.1v2.6M92.3 37.6v3.2M46.6 47.5h1.8M49.6 43.3v2.8M20.4 33.3v1.6M22.9 27.7h2.6M66.8 41.3h3.0M48.6 24.5h4.1M64.3 24.9v3.4M37.4 24.0h4.0M58.8 52.1h2.9M15.8 51.3v2.6M62.6 37.5h2.2M17.1 50.8h3.4M19.9 48.5h1.5M75.8 49.1h4.3M100.7 24.0v1.8M76.6 23.8v2.6M90.4 49.8h4.4M89.2 27.8v3.4M99.0 48.9h4.1M20.3 39.1h4.3M89.3 50.2h3.9M26.1 52.0v2.8M63.9 49.6v2.4M69.2 42.3v3.4M89.6 47.8v3.1M30.7 26.2h3.1M93.7 26.3h3.6M60.4 43.5h2.2M42.9 52.5h2.5M67.4 28.6h1.6M14.0 41.0v1.8M23.8 48.2h4.1M68.7 50.2h3.1M32.0 47.8h3.4M28.9 26.6h4.2M34.1 35.9v3.1M30.7 47.6v3.4M98.2 51.5v3.4M83.7 51.6v3.0M25.9 35.2h4.3M18.5 38.1h2.7M44.2 24.3h4.0M52.9 27.4v1.8M41.5 52.3v3.4M29.8 36.8v3.4M81.5 52.4v3.4M80.3 40.9h2.4M91.1 42.9v3.4M42.7 39.3h3.0M31.8 23.7v3.3M35.6 33.6h1.5M37.3 49.5v3.2M69.1 27.9v2.7M47.0 50.3v1.7M50.0 39.6h2.9M94.8 27.0v3.3M49.0 33.6v1.7M96.1 43.0v2.3M17.0 23.6v3.4M66.1 23.7h4.1M26.6 49.5v2.3M49.9 38.8h3.7M23.0 41.6v2.3M76.8 27.2h2.1M99.2 28.5h1.5M15.4 23.2h4.2M33.7 38.3v2.5M86.8 51.9v3.4M52.1 27.5v3.4M41.6 41.2v3.4M53.7 49.6v3.0M39.3 48.3v3.3M56.5 27.6v2.6M45.2 50.4h4.2M83.7 49.4h4.2M44.8 37.0v3.4M45.4 25.3v2.0M90.5 50.1h2.0M15.0 37.7h3.9M20.2 47.5h3.5M84.8 49.9h2.5M43.8 36.7v3.1M75.3 52.0h2.5M46.3 23.5v3.1M83.6 47.9v2.0M73.2 37.3h4.4M40.1 23.7v3.4M14.5 25.9h2.1M33.7 27.3h4.2M93.1 52.7h2.9M91.1 28.5h2.9M17.4 49.3v3.4M82.3 43.2h4.2" stroke="#222" stroke-width="0.8"/>
<path d="M14 23.4h8v6.6M18 30v-2.4q0 3.6 3 3.6h33q3 0 3-3.6v-4M62 23.6v4q0 3.6 3 3.6h30q3 0 3-3.6" stroke="#1b9a2c" stroke-width="1" fill="none"/>
<path d="M14 22.8h8.4v5.6M94 22.8h8v5.6M20 32h36M60 32h38" stroke="#2d35e0" stroke-width="0.9" fill="none"/>
<path d="M15.6 32v14M17 32.6v14" stroke="#2d35e0" stroke-width="0.8"/><path d="M99.6 32v14" stroke="#2d35e0" stroke-width="0.9"/><path d="M98 32.6v13" stroke="#1b9a2c" stroke-width="0.8"/><path d="M16 32v12" stroke="#1b9a2c" stroke-width="0.6"/>
<path d="M14.6 46.2h86" stroke="#b228b0" stroke-width="1.3"/><path d="M36.8 31.6v14.6M76.8 31.6v14.6" stroke="#b228b0" stroke-width="1.1"/><path d="M18 45h17M78 44.8h21" stroke="#1b9a2c" stroke-width="0.8"/>
<path d="M24 39v6M30 39v6M84 39v6M90 39v6M26 38.4h6" stroke="#d04a78" stroke-width="0.6"/><rect x="53.4" y="42" width="1.8" height="2.2" fill="#2d35e0"/><rect x="60" y="42" width="1.8" height="2.2" fill="#1b9a2c"/>
<path d="M11.4 21.8v32.2M21.4 21.8v32.2M31.6 21.8v32.2M42 21.8v32.2M52.2 21.8v32.2M62.4 21.8v32.2M72.5 21.8v32.2M82.5 21.8v32.2M92.7 21.8v32.2M103.1 21.8v32.2M6 22.6h103M6 32.8h103M6 43h103M6 53.4h103" stroke="#333" stroke-width="0.3" opacity=".7"/>
<path d="M11.4 17.599999999999998v3.8M11.4 54.2v4.2M21.4 17.599999999999998v3.8M21.4 54.2v4.2M31.6 17.599999999999998v3.8M31.6 54.2v4.2M42 17.599999999999998v3.8M42 54.2v4.2M52.2 17.599999999999998v3.8M52.2 54.2v4.2M62.4 17.599999999999998v3.8M62.4 54.2v4.2M72.5 17.599999999999998v3.8M72.5 54.2v4.2M82.5 17.599999999999998v3.8M82.5 54.2v4.2M92.7 17.599999999999998v3.8M92.7 54.2v4.2M103.1 17.599999999999998v3.8M103.1 54.2v4.2" stroke="#444" stroke-width="0.5" opacity=".8"/>
<path d="M105.8 22.6v31M107.4 22.6v31" stroke="#777" stroke-width="0.4"/>
<rect x="98.4" y="3.2" width="11.6" height="12" fill="#c9c9c9" stroke="#e0405e" stroke-width="0.7" stroke-dasharray="1.2 0.8"/><path d="M100 6h8M100 9h8M100 12h8M103 4.6v9.4M106.4 4.6v9.4" stroke="#999" stroke-width="0.5"/>
<path d="M99 74.4h7" stroke="#666" stroke-width="0.5"/>
<g id="tb">
<path d="M5.2 72.4h106.4" stroke="#444" stroke-width="0.6"/>
<path d="M32.4 72.4v6.8M41.6 72.4v6.8M50.2 72.4v6.8M58.7 72.4v6.8M67.6 72.4v6.8M76.7 72.4v6.8M85.6 72.4v6.8M93.5 72.4v6.8M102.7 72.4v6.8" stroke="#777" stroke-width="0.5"/>
<rect x="6.6" y="73.7" width="4.6" height="4.6" fill="#2a86c8"/><rect x="8" y="75.1" width="1.8" height="1.8" fill="#fff"/>
<text x="12.6" y="78" font-size="4.6" font-weight="bold" fill="#2a86c8" textLength="17.8" lengthAdjust="spacingAndGlyphs">BLUEBEAM</text>
<rect x="68.4" y="74.8" width="7.4" height="1.8" fill="#333"/>
<path d="M34 74.2h4M34 75.6h5M34 77h3M43 74.2h5M43 77.4h6M52 74.4h4M52 76h5M60 74.2h6M60 75.8h4M60 77.4h5M78.5 76.2h5M104.4 74.2h4M105 77.2h5" stroke="#999" stroke-width="0.45"/>
</g>
</g>
<text x="103.2" y="515.3" font-size="9.7" fill="#e6e6e6" text-anchor="middle" textLength="78.3" lengthAdjust="spacingAndGlyphs">Mechanical Layout</text>
<text x="103.5" y="527.3" font-size="9.7" fill="#e6e6e6" text-anchor="middle" textLength="43.2" lengthAdjust="spacingAndGlyphs">1 in = 8'-0&quot;</text>
<g id="thumb6" transform="translate(168.9 419)">
<rect x="0" y="0" width="114.9" height="81.8" fill="#c4c4c4"/><rect x="0.7" y="0.7" width="113.5" height="80.2" fill="#fff"/>
<rect x="5.2" y="2.4" width="106.4" height="76.8" fill="none" stroke="#555" stroke-width="0.55"/>
<rect x="10.8" y="24.2" width="93" height="31.4" fill="#fff" stroke="#444" stroke-width="0.5"/><rect x="10.8" y="23" width="61" height="1.6" fill="#333"/>
<path d="M11.6 25.4h68.6v5.4M11.6 25.4v21.4M33.6 25.4v5.4h46.6M24 49.4v8h13M24 49.4h9.6M48 50v7.6M52 50v7.6M56 57.6h14M75 50v7.4h14.6v-7.4" stroke="#3a3ad8" stroke-width="0.9" fill="none"/>
<path d="M67.6 54.7v3.0M86.3 29.9h1.8M35.2 28.7h2.5M88.6 49.4h3.0M14.2 30.4h3.7M96.7 50.2v2.0M47.0 39.1h1.7M65.9 41.8h2.4M73.9 39.7h3.9M78.5 35.2v2.4M52.9 29.5v3.0M95.0 38.5v1.8M82.6 30.3v2.0M45.2 26.7h2.3M29.3 36.5h1.9M98.9 50.4h2.4M70.0 44.8h2.3M98.4 36.3h1.8M26.8 51.7v3.0M53.0 42.3v2.7M23.7 40.3h3.7M56.3 28.6v3.0M73.7 51.2v3.0M36.8 42.2v3.0M15.0 37.5v2.2M71.9 37.7v2.4M88.8 54.7v1.9M31.1 27.8v3.0M28.8 40.8v2.3M88.6 50.2v2.6M32.8 41.3h3.9M90.7 51.9h1.6M46.7 40.9h1.5M38.0 36.2v3.0M39.9 40.1v3.0M50.0 30.1h1.9M55.0 49.5h1.5M62.7 52.8h2.4M33.5 27.5h3.0M98.4 39.2h2.7M55.0 41.2h1.6M47.7 40.6h3.5M37.0 50.8v3.0M88.3 30.4v2.3M42.9 40.3v3.0M25.4 26.0v3.0M15.3 52.5v3.0M87.8 53.1h2.0M85.4 43.4v3.0M54.6 36.7v3.0M50.6 35.5v3.0M71.1 42.2h3.3M86.4 54.7v3.0M74.7 28.2h1.7" stroke="#444" stroke-width="0.5"/>
<path d="M25 37v9M27.4 37v9M29.8 37v9M32.2 37v9M34.6 37v9M37 37v9M75 37v9M77.4 37v9M79.8 37v9M82.2 37v9M84.6 37v9M87 37v9" stroke="#777" stroke-width="0.4"/>
<g fill="#222"><rect x="45.4" y="37.6" width="4.6" height="4.4"/><rect x="65.6" y="36.6" width="4.4" height="4.4"/><rect x="71.6" y="40.6" width="3.4" height="3.4"/><rect x="48" y="43.2" width="5" height="1.6"/><rect x="55.6" y="51.6" width="8" height="2.8"/><rect x="41.4" y="51.4" width="4" height="3.6"/></g>
<g fill="#2fae3c"><circle cx="61.9" cy="45.1" r="0.5"/><circle cx="78.6" cy="34.1" r="0.5"/><circle cx="63.3" cy="29.4" r="0.5"/><circle cx="48.1" cy="44.1" r="0.5"/><circle cx="13.9" cy="28.7" r="0.5"/><circle cx="73.3" cy="40.2" r="0.5"/><circle cx="44.1" cy="45.0" r="0.5"/><circle cx="93.5" cy="30.0" r="0.5"/><circle cx="38.9" cy="42.5" r="0.5"/><circle cx="72.7" cy="34.4" r="0.5"/><circle cx="95.9" cy="41.9" r="0.5"/><circle cx="32.4" cy="27.8" r="0.5"/><circle cx="33.7" cy="50.1" r="0.5"/><circle cx="37.9" cy="54.3" r="0.5"/><circle cx="84.1" cy="51.0" r="0.5"/><circle cx="52.9" cy="37.3" r="0.5"/><circle cx="24.5" cy="26.5" r="0.5"/><circle cx="43.1" cy="42.6" r="0.5"/><circle cx="16.2" cy="51.0" r="0.5"/><circle cx="57.6" cy="39.2" r="0.5"/><circle cx="47.3" cy="39.4" r="0.5"/><circle cx="97.8" cy="29.1" r="0.5"/><circle cx="59.7" cy="41.7" r="0.5"/><circle cx="46.8" cy="50.6" r="0.5"/><circle cx="96.1" cy="38.5" r="0.5"/><circle cx="82.9" cy="47.7" r="0.5"/><circle cx="20.4" cy="52.4" r="0.5"/><circle cx="56.2" cy="32.1" r="0.5"/><circle cx="74.7" cy="36.9" r="0.5"/><circle cx="86.6" cy="34.4" r="0.5"/><circle cx="94.9" cy="46.5" r="0.5"/><circle cx="83.1" cy="37.0" r="0.5"/><circle cx="76.6" cy="36.4" r="0.5"/><circle cx="39.0" cy="44.3" r="0.5"/><circle cx="97.6" cy="36.5" r="0.5"/><circle cx="16.2" cy="54.8" r="0.5"/><circle cx="31.9" cy="31.2" r="0.5"/><circle cx="18.6" cy="27.1" r="0.5"/><circle cx="29.4" cy="31.7" r="0.5"/><circle cx="56.1" cy="53.2" r="0.5"/><circle cx="71.2" cy="36.1" r="0.5"/><circle cx="50.6" cy="34.7" r="0.5"/></g>
<g fill="#e0402c"><circle cx="15" cy="27.4" r="0.6"/><circle cx="20" cy="27" r="0.6"/><circle cx="41" cy="27" r="0.6"/><circle cx="47" cy="27.4" r="0.6"/><circle cx="53" cy="27" r="0.6"/><circle cx="61" cy="26.6" r="0.6"/><circle cx="66" cy="27.2" r="0.6"/><circle cx="71" cy="27" r="0.6"/><circle cx="76" cy="27.4" r="0.6"/><circle cx="13.4" cy="35" r="0.6"/><circle cx="13.4" cy="40" r="0.6"/><circle cx="13.4" cy="45" r="0.6"/><circle cx="100.4" cy="33" r="0.6"/><circle cx="100.4" cy="39" r="0.6"/><circle cx="100.4" cy="45" r="0.6"/><circle cx="59" cy="29.6" r="0.6"/></g>
<path d="M11.4 21v39M21.4 21v39M31.6 21v39M42 21v39M52.2 21v39M62.4 21v39M72.5 21v39M82.5 21v39M92.7 21v39M103.1 21v39M6 25h103M6 35.4h103M6 45.6h103M6 55.8h103" stroke="#111" stroke-width="0.4" stroke-dasharray="1.4 1" opacity=".55"/>
<path d="M11.4 19.8v3.8M11.4 56v4.2M21.4 19.8v3.8M21.4 56v4.2M31.6 19.8v3.8M31.6 56v4.2M42 19.8v3.8M42 56v4.2M52.2 19.8v3.8M52.2 56v4.2M62.4 19.8v3.8M62.4 56v4.2M72.5 19.8v3.8M72.5 56v4.2M82.5 19.8v3.8M82.5 56v4.2M92.7 19.8v3.8M92.7 56v4.2M103.1 19.8v3.8M103.1 56v4.2" stroke="#111" stroke-width="0.5" opacity=".8"/>
<rect x="75.4" y="6.2" width="33.4" height="9" fill="#fff" stroke="#5a4ae0" stroke-width="0.6"/><path d="M86 7.8h10M79.6 10.4h12M96 10.4h6M105 10.4h1.4M79.6 13.4h14M98 13.4h3M103.4 13.4h4" stroke="#666" stroke-width="0.6"/><rect x="76.6" y="12.6" width="1.6" height="1.6" fill="#e0402c"/><path d="M76.8 10.8l1.4-1" stroke="#5a4ae0" stroke-width="0.5"/>
<rect x="97.4" y="20.6" width="8" height="3.2" rx="0.6" fill="#fbe0a8" stroke="#f0921e" stroke-width="0.7"/>
<g id="tb">
<path d="M5.2 72.4h106.4" stroke="#444" stroke-width="0.6"/>
<path d="M32.4 72.4v6.8M41.6 72.4v6.8M50.2 72.4v6.8M58.7 72.4v6.8M67.6 72.4v6.8M76.7 72.4v6.8M85.6 72.4v6.8M93.5 72.4v6.8M102.7 72.4v6.8" stroke="#777" stroke-width="0.5"/>
<rect x="6.6" y="73.7" width="4.6" height="4.6" fill="#2a86c8"/><rect x="8" y="75.1" width="1.8" height="1.8" fill="#fff"/>
<text x="12.6" y="78" font-size="4.6" font-weight="bold" fill="#2a86c8" textLength="17.8" lengthAdjust="spacingAndGlyphs">BLUEBEAM</text>
<rect x="68.4" y="74.8" width="7.4" height="1.8" fill="#333"/>
<path d="M34 74.2h4M34 75.6h5M34 77h3M43 74.2h5M43 77.4h6M52 74.4h4M52 76h5M60 74.2h6M60 75.8h4M60 77.4h5M78.5 76.2h5M104.4 74.2h4M105 77.2h5" stroke="#999" stroke-width="0.45"/>
</g>
</g>
<text x="225.3" y="515.3" font-size="9.7" fill="#e6e6e6" text-anchor="middle" textLength="68.1" lengthAdjust="spacingAndGlyphs">Electrical Layout</text>
<text x="225.4" y="527.3" font-size="9.7" fill="#e6e6e6" text-anchor="middle" textLength="62.2" lengthAdjust="spacingAndGlyphs">3.75 in = 30'-0&quot;</text>
<clipPath id="c7"><rect x="40" y="560" width="256" height="44.6"/></clipPath>
<g clip-path="url(#c7)">
<g id="thumb7" transform="translate(47.1 566.3)">
<rect x="0" y="0" width="114.9" height="81.8" fill="#c4c4c4"/><rect x="0.7" y="0.7" width="113.5" height="80.2" fill="#fff"/>
<rect x="5.2" y="2.4" width="106.4" height="76.8" fill="none" stroke="#555" stroke-width="0.55"/>
<rect x="8.2" y="6.2" width="48" height="9.2" fill="#b9b9b9" stroke="#888" stroke-width="0.4"/><path d="M8.2 9h48M8.2 12.2h48M24 6.2v9.2M41 6.2v9.2M51.6 6.2v9.2" stroke="#8f8f8f" stroke-width="0.35"/>
<text x="12" y="8.5" font-size="2.4" font-weight="bold" fill="#333" textLength="10.6" lengthAdjust="spacingAndGlyphs">Description</text><text x="30" y="8.5" font-size="2.4" font-weight="bold" fill="#333">Label</text><text x="42" y="8.5" font-size="2.4" font-weight="bold" fill="#333" textLength="8" lengthAdjust="spacingAndGlyphs">Quantity</text><text x="52" y="8.5" font-size="2.4" font-weight="bold" fill="#333">Unit</text>
<rect x="9.2" y="9.8" width="1.6" height="1.6" fill="#2ecc40"/><text x="12" y="11.6" font-size="2.4" fill="#333">VAV Boxes</text><text x="25" y="11.6" font-size="2.4" fill="#333" textLength="15" lengthAdjust="spacingAndGlyphs">New Tab Summary</text><text x="43" y="11.6" font-size="2.4" fill="#333">10 EA</text>
<rect x="9.2" y="13" width="1.6" height="1.2" fill="#8a8ae6"/><text x="12" y="14.7" font-size="2.4" fill="#333">Ductwork</text><text x="29" y="14.7" font-size="2.4" fill="#333">Markup</text><text x="43" y="14.7" font-size="2.4" fill="#333">310 LF</text>
<path d="M54.6 18.6h7" stroke="#d9d98a" stroke-width="0.6"/>
<rect x="12.2" y="34.2" width="41.4" height="6" fill="#eee" stroke="#777" stroke-width="0.5"/><path d="M13.6 35.2v5M16.2 35.2v5M18.8 35.2v5M21.4 35.2v5M24.0 35.2v5M26.6 35.2v5M29.2 35.2v5M31.8 35.2v5M34.4 35.2v5M37.0 35.2v5M39.6 35.2v5M42.2 35.2v5M44.8 35.2v5M47.4 35.2v5M50.0 35.2v5M52.6 35.2v5" stroke="#999" stroke-width="1.2"/>
<path d="M64 10.4l2.4-2.2h28.6v4h4v26" stroke="#333" stroke-width="0.5" fill="none"/><path d="M63.6 10.4v28" stroke="#888" stroke-width="1"/>
<g stroke="#7b78e0" stroke-width="2" fill="none"><path d="M66.4 12v14"/><path d="M73.6 11.6v5.4a3 3 0 0 0 6 0v-5.4"/><path d="M98.4 19v20M102.4 19v20M98.4 19h4"/><path d="M94 39v-6q0-3 3-3h8q2 0 2 3v6"/></g>
<g stroke="#2fd43c" stroke-width="1.2" fill="none"><path d="M66 11.4l4-2.6l8 1.4l6 2.6h7M67.6 13v13M69 27l2 3M82 30l4 1l8-1.6M72 38l8-3l8 1l5-4M86 9.6l6 3"/></g>
<rect x="71.4" y="20" width="18.6" height="7.6" fill="#ddd" stroke="#222" stroke-width="1"/><rect x="73" y="21.4" width="15.4" height="4.6" fill="#bbb" stroke="#555" stroke-width="0.4"/>
<circle cx="90.2" cy="11.8" r="2.6" fill="#fff" stroke="#333" stroke-width="0.5"/><circle cx="90.2" cy="11.8" r="1" fill="#222"/><circle cx="76" cy="34.6" r="2.4" fill="none" stroke="#333" stroke-width="0.6"/><path d="M69 30a8 8 0 0 0 6 8" stroke="#444" stroke-width="0.5" fill="none"/>
</g>
</g>
<g clip-path="url(#c7)">
<rect x="165.2" y="562.1" width="122.8" height="60" fill="#0b6bbc"/>
<rect x="168.9" y="566" width="114" height="60" fill="#cfdff1"/>
<rect x="174.4" y="568.7" width="106.3" height="60" fill="none" stroke="#667" stroke-width="0.6"/>
<path d="M185.3 605v-15.8h81.4V605" fill="none" stroke="#556" stroke-width="0.6"/>
<rect x="202.2" y="589.9" width="48.8" height="20" fill="#fff" stroke="#e0303a" stroke-width="0.8"/>
<path d="M186 604l3-9l3 9l3-9l3 9M254 604l3-9l3 9l3-9l3 9" stroke="#889" stroke-width="0.5" fill="none"/><path d="M196 597h6M199 595v10M205 595v10M208 597h8M246 595v10M251 597h5M256 595v10" stroke="#223" stroke-width="0.6"/>
<path d="M210 600.4h30" stroke="#222" stroke-width="1" stroke-dasharray="2.4 0.8"/><path d="M210 602.6h30" stroke="#2ac0a0" stroke-width="1.2"/><path d="M210 604h30" stroke="#3a7ad8" stroke-width="0.8"/>
</g>
<clipPath id="cv"><rect x="296.4" y="86.6" width="713.6" height="513.8"/></clipPath>
<g id="drawing" clip-path="url(#cv)" fill="none" stroke="#111" stroke-linecap="butt">
<rect x="295.6" y="237.3" width="1.6" height="19.6" fill="#000" stroke="none"/>
<path d="M296 184.5h66.8" stroke-width="1.7"/><path d="M362 184.5v314" stroke-width="1.8"/>
<path d="M296.5 188L361.4 224.4L296.5 261" stroke-width="0.8" stroke="#222" stroke-dasharray="13 3 1.2 3"/>
<path d="M296 265.2h66" stroke="#8a8a8a" stroke-width="1.1"/>
<path d="M296 270.3h61v228" stroke-width="0.9" stroke="#222"/>
<path d="M296 273h58.1v3.4h-58.1M296 279.2h61" stroke-width="0.8" stroke="#222"/>
<path d="M296 490.4h61" stroke-width="0.9" stroke="#333"/>
<rect x="297.0" y="378.0" width="33.7" height="9.7" rx="4.8" fill="#fff" stroke="#333" stroke-width="0.8"/>
<text x="313.9" y="385.7" font-size="7.8" fill="#222" stroke="none" text-anchor="middle" textLength="19" lengthAdjust="spacingAndGlyphs">EQ-02</text>
<g stroke="none">
<rect x="390.4" y="455" width="181.6" height="18.5" fill="#ffff7d"/>
<rect x="643.2" y="455" width="97.6" height="18.5" fill="#ffff7d"/>
<rect x="812.6" y="456.2" width="180.8" height="18.5" fill="#ffff7d"/>
<rect x="402.1" y="342.3" width="579.9" height="49" fill="url(#glz)"/>
</g>
<rect x="402.1" y="342.3" width="579.9" height="49" stroke="#4a34a0" stroke-width="0.6" opacity=".75"/>
<path d="M389.6 498.4V184.5H994V498.4" stroke-width="1.7"/>
<path d="M296 498.2h714" stroke-width="2.3" stroke="#000"/>
<path d="M482.3 180.6V503" stroke-width="0.8"/>
<path d="M480.4 182.0L484.2 187.0" stroke-width="1.4" stroke="#000"/>
<path d="M480.4 236.8L484.2 241.8" stroke-width="1.4" stroke="#000"/>
<path d="M480.4 336.2L484.2 341.2" stroke-width="1.4" stroke="#000"/>
<path d="M480.4 406.5L484.2 411.5" stroke-width="1.4" stroke="#000"/>
<path d="M480.4 495.7L484.2 500.7" stroke-width="1.4" stroke="#000"/>
<path d="M385.6 279.2h61.2" stroke-width="0.8"/>
<path d="M387.1 281.1L392.1 277.3" stroke-width="1.4" stroke="#000"/>
<path d="M441.1 281.1L446.1 277.3" stroke-width="1.4" stroke="#000"/>
<path d="M938 287.2h59.6" stroke-width="0.8"/>
<path d="M938.1 289.1L943.1 285.3" stroke-width="1.4" stroke="#000"/>
<path d="M991.5 289.1L996.5 285.3" stroke-width="1.4" stroke="#000"/>
<text x="411.5" y="273.6" font-size="9" fill="#222" textLength="10.8" lengthAdjust="spacingAndGlyphs" stroke="none">EQ</text>
<text x="961.7" y="281.8" font-size="9" fill="#222" textLength="10.6" lengthAdjust="spacingAndGlyphs" stroke="none">EQ</text>
<text transform="translate(477 217.2) rotate(-90)" font-size="9" fill="#222" stroke="none" textLength="10.4" lengthAdjust="spacingAndGlyphs">EQ</text>
<text transform="translate(477.4 379) rotate(-90)" font-size="8.6" fill="#1a1a40" stroke="none" textLength="14.4" lengthAdjust="spacingAndGlyphs">2'-0&quot;</text>
<text transform="translate(477.4 461) rotate(-90)" font-size="8.6" fill="#222" stroke="none" textLength="18" lengthAdjust="spacingAndGlyphs">2'-10&quot;</text>
<rect x="397.1" y="191.4" width="31.6" height="10.3" rx="5.1" fill="#fff" stroke="#333" stroke-width="0.8"/>
<text x="412.9" y="199.4" font-size="7.9" fill="#222" stroke="none" text-anchor="middle" textLength="17.4" lengthAdjust="spacingAndGlyphs">PT - 2</text>
<rect x="443.4" y="239.3" width="497.2" height="99.4" stroke="#222" stroke-width="0.95"/>
<path d="M493.2 239.3V338.7M542.4 239.3V338.7M592.4 239.3V338.7M642.4 239.3V338.7M691.7 239.3V338.7M741.4 239.3V338.7M791.2 239.3V338.7M840.7 239.3V338.7M890.3 239.3V338.7" stroke="#222" stroke-width="0.95"/>
<path d="M493.2 239.3L443.4 288.6L493.2 338.7M493.2 239.3L542.4 288.6L493.2 338.7M592.4 239.3L542.4 288.6L592.4 338.7M592.4 239.3L642.4 288.6L592.4 338.7M691.7 239.3L642.4 288.6L691.7 338.7M691.7 239.3L741.4 288.6L691.7 338.7M791.2 239.3L741.4 288.6L791.2 338.7M791.2 239.3L840.7 288.6L791.2 338.7M890.3 239.3L840.7 288.6L890.3 338.7M890.3 239.3L940.6 288.6L890.3 338.7" stroke="#2a2a2a" stroke-width="0.65" stroke-dasharray="14 3.4 1.2 3.4"/>
<path d="M445 332H939.4" stroke="#969696" stroke-width="1.15" stroke-dasharray="5.6 3"/>
<rect x="486.4" y="311.3" width="3" height="18.8" fill="#d8d8d8" stroke="#666" stroke-width="0.7"/>
<rect x="497.0" y="311.3" width="3" height="18.8" fill="#d8d8d8" stroke="#666" stroke-width="0.7"/>
<rect x="585.6" y="311.3" width="3" height="18.8" fill="#d8d8d8" stroke="#666" stroke-width="0.7"/>
<rect x="596.2" y="311.3" width="3" height="18.8" fill="#d8d8d8" stroke="#666" stroke-width="0.7"/>
<rect x="684.9" y="311.3" width="3" height="18.8" fill="#d8d8d8" stroke="#666" stroke-width="0.7"/>
<rect x="695.5" y="311.3" width="3" height="18.8" fill="#d8d8d8" stroke="#666" stroke-width="0.7"/>
<rect x="784.4" y="311.3" width="3" height="18.8" fill="#d8d8d8" stroke="#666" stroke-width="0.7"/>
<rect x="795.0" y="311.3" width="3" height="18.8" fill="#d8d8d8" stroke="#666" stroke-width="0.7"/>
<rect x="883.5" y="311.3" width="3" height="18.8" fill="#d8d8d8" stroke="#666" stroke-width="0.7"/>
<rect x="894.1" y="311.3" width="3" height="18.8" fill="#d8d8d8" stroke="#666" stroke-width="0.7"/>
<path d="M487.6 332.6L493.2 338.7L498.8 332.6M586.8 332.6L592.4 338.7L598.0 332.6M686.1 332.6L691.7 338.7L697.3 332.6M785.6 332.6L791.2 338.7L796.8 332.6M884.7 332.6L890.3 338.7L895.9 332.6" stroke="#333" stroke-width="0.6"/>
<rect x="445.2" y="242.7" width="31.4" height="9.5" rx="4.8" fill="#fff" stroke="#333" stroke-width="0.8"/>
<text x="460.9" y="250.4" font-size="8.2" fill="#1a1a1a" stroke="none" text-anchor="middle" textLength="26" lengthAdjust="spacingAndGlyphs">PLAM-01</text>
<rect x="496.6" y="243.8" width="31.4" height="9.5" rx="4.8" fill="#fff" stroke="#333" stroke-width="0.8"/>
<text x="512.3" y="251.5" font-size="8.2" fill="#1a1a1a" stroke="none" text-anchor="middle" textLength="26" lengthAdjust="spacingAndGlyphs">PLAM-01</text>
<rect x="544.5" y="243.7" width="31.4" height="9.5" rx="4.8" fill="#fff" stroke="#333" stroke-width="0.8"/>
<text x="560.2" y="251.4" font-size="8.2" fill="#1a1a1a" stroke="none" text-anchor="middle" textLength="26" lengthAdjust="spacingAndGlyphs">PLAM-01</text>
<rect x="595.2" y="243.5" width="31.4" height="9.5" rx="4.8" fill="#fff" stroke="#333" stroke-width="0.8"/>
<text x="610.9" y="251.2" font-size="8.2" fill="#1a1a1a" stroke="none" text-anchor="middle" textLength="26" lengthAdjust="spacingAndGlyphs">PLAM-01</text>
<rect x="644.4" y="244.6" width="31.4" height="9.5" rx="4.8" fill="#fff" stroke="#333" stroke-width="0.8"/>
<text x="660.1" y="252.3" font-size="8.2" fill="#1a1a1a" stroke="none" text-anchor="middle" textLength="26" lengthAdjust="spacingAndGlyphs">PLAM-01</text>
<rect x="695.0" y="244.6" width="31.4" height="9.5" rx="4.8" fill="#fff" stroke="#333" stroke-width="0.8"/>
<text x="710.7" y="252.3" font-size="8.2" fill="#1a1a1a" stroke="none" text-anchor="middle" textLength="26" lengthAdjust="spacingAndGlyphs">PLAM-01</text>
<rect x="743.1" y="244.0" width="31.4" height="9.5" rx="4.8" fill="#fff" stroke="#333" stroke-width="0.8"/>
<text x="758.8" y="251.7" font-size="8.2" fill="#1a1a1a" stroke="none" text-anchor="middle" textLength="26" lengthAdjust="spacingAndGlyphs">PLAM-01</text>
<rect x="792.5" y="244.4" width="31.4" height="9.5" rx="4.8" fill="#fff" stroke="#333" stroke-width="0.8"/>
<text x="808.2" y="252.1" font-size="8.2" fill="#1a1a1a" stroke="none" text-anchor="middle" textLength="26" lengthAdjust="spacingAndGlyphs">PLAM-01</text>
<rect x="845.4" y="244.0" width="31.4" height="9.5" rx="4.8" fill="#fff" stroke="#333" stroke-width="0.8"/>
<text x="861.1" y="251.7" font-size="8.2" fill="#1a1a1a" stroke="none" text-anchor="middle" textLength="26" lengthAdjust="spacingAndGlyphs">PLAM-01</text>
<rect x="893.3" y="244.8" width="31.4" height="9.5" rx="4.8" fill="#fff" stroke="#333" stroke-width="0.8"/>
<text x="909.0" y="252.5" font-size="8.2" fill="#1a1a1a" stroke="none" text-anchor="middle" textLength="26" lengthAdjust="spacingAndGlyphs">PLAM-01</text>
<rect x="451.7" y="276.9" width="37.8" height="18.8" fill="#06ea06" stroke="#2f8fd0" stroke-width="0.9"/>
<text x="470.7" y="289.5" font-size="8.4" fill="#031003" text-anchor="middle" textLength="30.4" lengthAdjust="spacingAndGlyphs" stroke="none">PLAM-01</text>
<rect x="501.0" y="276.9" width="37.8" height="18.8" fill="#06ea06" stroke="#2f8fd0" stroke-width="0.9"/>
<text x="520" y="289.5" font-size="8.4" fill="#031003" text-anchor="middle" textLength="30.4" lengthAdjust="spacingAndGlyphs" stroke="none">PLAM-01</text>
<rect x="549.6" y="276.9" width="37.8" height="18.8" fill="#06ea06" stroke="#2f8fd0" stroke-width="0.9"/>
<text x="568.6" y="289.5" font-size="8.4" fill="#031003" text-anchor="middle" textLength="30.4" lengthAdjust="spacingAndGlyphs" stroke="none">PLAM-01</text>
<rect x="598.3" y="276.9" width="37.8" height="18.8" fill="#06ea06" stroke="#2f8fd0" stroke-width="0.9"/>
<text x="617.3" y="289.5" font-size="8.4" fill="#031003" text-anchor="middle" textLength="30.4" lengthAdjust="spacingAndGlyphs" stroke="none">PLAM-01</text>
<rect x="649.0" y="276.9" width="37.8" height="18.8" fill="#06ea06" stroke="#2f8fd0" stroke-width="0.9"/>
<text x="668" y="289.5" font-size="8.4" fill="#031003" text-anchor="middle" textLength="30.4" lengthAdjust="spacingAndGlyphs" stroke="none">PLAM-01</text>
<rect x="698.5" y="276.9" width="37.8" height="18.8" fill="#06ea06" stroke="#2f8fd0" stroke-width="0.9"/>
<text x="717.5" y="289.5" font-size="8.4" fill="#031003" text-anchor="middle" textLength="30.4" lengthAdjust="spacingAndGlyphs" stroke="none">PLAM-01</text>
<rect x="749.4" y="276.9" width="37.8" height="18.8" fill="#06ea06" stroke="#2f8fd0" stroke-width="0.9"/>
<text x="768.4" y="289.5" font-size="8.4" fill="#031003" text-anchor="middle" textLength="30.4" lengthAdjust="spacingAndGlyphs" stroke="none">PLAM-01</text>
<rect x="798.0" y="276.9" width="37.8" height="18.8" fill="#06ea06" stroke="#2f8fd0" stroke-width="0.9"/>
<text x="817" y="289.5" font-size="8.4" fill="#031003" text-anchor="middle" textLength="30.4" lengthAdjust="spacingAndGlyphs" stroke="none">PLAM-01</text>
<rect x="846.7" y="276.9" width="37.8" height="18.8" fill="#06ea06" stroke="#2f8fd0" stroke-width="0.9"/>
<text x="865.7" y="289.5" font-size="8.4" fill="#031003" text-anchor="middle" textLength="30.4" lengthAdjust="spacingAndGlyphs" stroke="none">PLAM-01</text>
<rect x="896.4" y="276.9" width="37.8" height="18.8" fill="#06ea06" stroke="#2f8fd0" stroke-width="0.9"/>
<text x="915.4" y="289.5" font-size="8.4" fill="#031003" text-anchor="middle" textLength="30.4" lengthAdjust="spacingAndGlyphs" stroke="none">PLAM-01</text>
<text x="633.6" y="354.8" font-size="8.6" fill="#fff" font-weight="bold" text-anchor="middle" stroke="none">Fixed Panel Glazing</text>
<text x="633.6" y="364.4" font-size="8.6" fill="#fff" font-weight="bold" text-anchor="middle" stroke="none">A = 26.1 sf</text>
<text x="633.6" y="374" font-size="8.6" fill="#fff" font-weight="bold" text-anchor="middle" stroke="none">W = 210&quot;</text>
<text x="633.6" y="383.6" font-size="8.6" fill="#fff" font-weight="bold" text-anchor="middle" stroke="none">H = 18&quot;</text>
<rect x="820.1" y="360.3" width="30.9" height="9.4" rx="4.7" stroke="#2a2a50" stroke-width="0.8"/>
<text x="835.6" y="368.1" font-size="8.2" fill="#1c1c40" text-anchor="middle" textLength="22.6" lengthAdjust="spacingAndGlyphs" stroke="none">GL-12</text>
<rect x="416.2" y="394.3" width="13.5" height="8.4" rx="0.8" fill="#fff" stroke="#666" stroke-width="0.95"/><rect x="418.4" y="396" width="9.1" height="5" fill="#d2d2d2" stroke="none"/><rect x="419.2" y="396.4" width="3.1" height="3.5" fill="#3a3a3a" stroke="none"/><rect x="423.5" y="396.4" width="3.1" height="3.5" fill="#3a3a3a" stroke="none"/>
<rect x="513.3" y="394.3" width="13.5" height="8.4" rx="0.8" fill="#fff" stroke="#666" stroke-width="0.95"/><rect x="515.5" y="396" width="9.1" height="5" fill="#d2d2d2" stroke="none"/><rect x="516.3" y="396.4" width="3.1" height="3.5" fill="#3a3a3a" stroke="none"/><rect x="520.6" y="396.4" width="3.1" height="3.5" fill="#3a3a3a" stroke="none"/>
<rect x="609.9" y="394.3" width="13.5" height="8.4" rx="0.8" fill="#fff" stroke="#666" stroke-width="0.95"/><rect x="612.1" y="396" width="9.1" height="5" fill="#d2d2d2" stroke="none"/><rect x="612.9" y="396.4" width="3.1" height="3.5" fill="#3a3a3a" stroke="none"/><rect x="617.2" y="396.4" width="3.1" height="3.5" fill="#3a3a3a" stroke="none"/>
<rect x="757.1" y="394.3" width="13.5" height="8.4" rx="0.8" fill="#fff" stroke="#666" stroke-width="0.95"/><rect x="759.3" y="396" width="9.1" height="5" fill="#d2d2d2" stroke="none"/><rect x="760.1" y="396.4" width="3.1" height="3.5" fill="#3a3a3a" stroke="none"/><rect x="764.4" y="396.4" width="3.1" height="3.5" fill="#3a3a3a" stroke="none"/>
<rect x="857.2" y="394.3" width="13.5" height="8.4" rx="0.8" fill="#fff" stroke="#666" stroke-width="0.95"/><rect x="859.4" y="396" width="9.1" height="5" fill="#d2d2d2" stroke="none"/><rect x="860.2" y="396.4" width="3.1" height="3.5" fill="#3a3a3a" stroke="none"/><rect x="864.5" y="396.4" width="3.1" height="3.5" fill="#3a3a3a" stroke="none"/>
<rect x="957.2" y="394.3" width="13.5" height="8.4" rx="0.8" fill="#fff" stroke="#666" stroke-width="0.95"/><rect x="959.4" y="396" width="9.1" height="5" fill="#d2d2d2" stroke="none"/><rect x="960.2" y="396.4" width="3.1" height="3.5" fill="#3a3a3a" stroke="none"/><rect x="964.5" y="396.4" width="3.1" height="3.5" fill="#3a3a3a" stroke="none"/>
<path d="M691.3 348.4l-1 27.4h3.2l-1-27.4z" fill="#5a4ab8" stroke="#2a2060" stroke-width="0.6"/><rect x="689.6" y="375.6" width="4.2" height="2.6" stroke="#222" stroke-width="0.7"/><path d="M690.4 378.4l-1.4 10.8h5.6l-1.4-10.8" stroke="#2a2060" stroke-width="0.7"/><path d="M689.4 389.2v15.4M694.4 389.2v15.4M689.4 392h5" stroke="#333" stroke-width="0.8"/><path d="M694.4 394.6h5.4q1.4 0 1.4 1.4v2.6q0 1.4-1.4 1.4h-5.4M700 394.4v-4" stroke="#333" stroke-width="0.8"/><circle cx="700" cy="389.8" r="0.9" stroke="#333" stroke-width="0.7"/>
<path d="M389.6 405H994" stroke="#858585" stroke-width="1.4"/><path d="M389.6 409.4H994" stroke-width="1.75"/>
<path d="M648 404.8h89" stroke="#555" stroke-width="1.2"/>
<path d="M389.6 426.4H572.6M389.6 487.9H572.6" stroke="#222" stroke-width="0.95"/>
<path d="M450.5 409.2V487.9M511.6 409.2V487.9" stroke="#222" stroke-width="0.95"/>
<path d="M389.6 426.6L450.5 409.6M450.5 426.6L389.6 453.8L450.5 487.9M450.5 426.6L511.6 409.6M450.5 426.6L511.6 459.6L450.5 487.9M511.6 426.6L572.6 409.6M511.6 426.6L572.6 459.6L511.6 487.9" stroke="#2a2a2a" stroke-width="0.65" stroke-dasharray="14 3.4 1.2 3.4"/>
<path d="M812 426.4H994M812 487.9H994" stroke="#222" stroke-width="0.95"/>
<path d="M872.6 409.2V487.9M933.5 409.2V487.9" stroke="#222" stroke-width="0.95"/>
<path d="M812 426.6L872.6 409.6M872.6 426.6L812 459.6L872.6 487.9M872.6 426.6L933.5 409.6M933.5 426.6L872.6 460L933.5 487.9M933.5 426.6L994 409.6M933.5 426.6L994 454.4L933.5 487.9" stroke="#2a2a2a" stroke-width="0.65" stroke-dasharray="14 3.4 1.2 3.4"/>
<path d="M572.6 409.2V498M574.4 409.2V498M640.4 409.2V498M642.4 409.2V498M741.4 409.2V498M743.6 409.2V498M810 409.2V498M812 409.2V498" stroke="#333" stroke-width="0.6"/>
<path d="M574.4 493.5H640.4" stroke="#333" stroke-width="0.8"/>
<rect x="582.2" y="411" width="48.8" height="4.6" rx="1.2" fill="#fff" stroke="#222" stroke-width="0.9"/>
<path d="M584.4 413.3H628.4" stroke="#555" stroke-width="1.4" stroke-dasharray="2.4 1.2 2.4 1.2 2.4 1.2 2.4 3 1.4 1.6"/>
<rect x="583.4" y="417.6" width="47.0" height="3" rx="1.5" fill="#fff" stroke="#333" stroke-width="0.7"/>
<path d="M743.6 493.5H810" stroke="#333" stroke-width="0.8"/>
<rect x="751.4" y="411" width="49.2" height="4.6" rx="1.2" fill="#fff" stroke="#222" stroke-width="0.9"/>
<path d="M753.6 413.3H798.0" stroke="#555" stroke-width="1.4" stroke-dasharray="2.4 1.2 2.4 1.2 2.4 1.2 2.4 3 1.4 1.6"/>
<rect x="752.6" y="417.6" width="47.4" height="3" rx="1.5" fill="#fff" stroke="#333" stroke-width="0.7"/>
<rect x="577.3" y="481.3" width="33.3" height="9.4" rx="4.7" fill="#fff" stroke="#333" stroke-width="0.8"/>
<text x="594.0" y="488.8" font-size="7.8" fill="#222" stroke="none" text-anchor="middle" textLength="18.8" lengthAdjust="spacingAndGlyphs">EQ-01</text>
<rect x="746.3" y="481.3" width="33.6" height="9.4" rx="4.7" fill="#fff" stroke="#333" stroke-width="0.8"/>
<text x="763.1" y="488.8" font-size="7.8" fill="#222" stroke="none" text-anchor="middle" textLength="18.8" lengthAdjust="spacingAndGlyphs">EQ-01</text>
<path d="M642.4 487.9H741.4" stroke="#222" stroke-width="1"/><path d="M691.7 409.2V487.9" stroke="#222" stroke-width="1.3"/>
<path d="M691.7 410L642.8 451L691.7 497.6M691.7 410L741 451L691.7 497.6" stroke="#2a2a2a" stroke-width="0.65" stroke-dasharray="14 3.4 1.2 3.4"/>
<rect x="686.2" y="416.3" width="2" height="17.2" rx="1" fill="#fff" stroke="#555" stroke-width="0.7"/><rect x="695.8" y="416.3" width="2" height="17.2" rx="1" fill="#fff" stroke="#555" stroke-width="0.7"/>
<text x="396.3" y="432.2" font-size="16" fill="#ff8000" textLength="179.7" lengthAdjust="spacingAndGlyphs" stroke="none">Lower Cabinets 24&quot; Deep</text>
<text x="485.9" y="450.8" font-size="16" fill="#ff8000" text-anchor="middle" textLength="22.4" lengthAdjust="spacingAndGlyphs" stroke="none">66&quot;</text>
<text x="603.8" y="435.4" font-size="16" fill="#ff8000" textLength="179.7" lengthAdjust="spacingAndGlyphs" stroke="none">Lower Cabinets 24&quot; Deep</text>
<text x="693.6" y="453.6" font-size="16" fill="#ff8000" text-anchor="middle" textLength="22.4" lengthAdjust="spacingAndGlyphs" stroke="none">36&quot;</text>
<text x="815" y="430" font-size="16" fill="#ff8000" textLength="180.3" lengthAdjust="spacingAndGlyphs" stroke="none">Lower Cabinets 24&quot; Deep</text>
<text x="905" y="448.4" font-size="16" fill="#ff8000" text-anchor="middle" textLength="22.6" lengthAdjust="spacingAndGlyphs" stroke="none">66&quot;</text>
</g>
</g>
</svg>
</body>
</html>
